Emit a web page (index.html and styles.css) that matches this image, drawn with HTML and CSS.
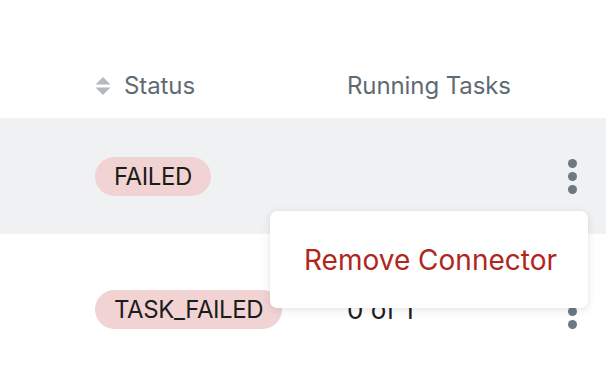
FILE: index.html
```html
<!DOCTYPE html>
<html>
<head>
<meta charset="utf-8">
<link rel="stylesheet" href="styles.css">
</head>
<body>
<div class="table">
  <div class="row head">
    <div class="cell c-status">
      <svg class="sort" width="16" height="18" viewBox="0 0 16 18"><path d="M8 0 L15.5 7.5 H0.5 Z M8 18 L15.5 10.5 H0.5 Z" fill="#b3babe"/></svg>
      <span>Status</span>
    </div>
    <div class="cell c-tasks">Running Tasks</div>
  </div>
  <div class="row body r1">
    <div class="cell c-status"><span class="badge">FAILED</span></div>
    <div class="cell c-tasks"></div>
    <div class="kebab"><i></i><i></i><i></i></div>
  </div>
  <div class="row body r2">
    <div class="cell c-status"><span class="badge">TASK_FAILED</span></div>
    <div class="cell c-tasks val">0 of 1</div>
    <div class="kebab"><i></i><i></i><i></i></div>
  </div>
</div>
<div class="menu">
  <div class="menu-item">Remove Connector</div>
</div>
</body>
</html>
```
FILE: styles.css
```css
html, body {
  margin: 0;
  padding: 0;
  background: #ffffff;
  width: 606px;
  height: 376px;
  overflow: hidden;
  font-family: Inter, "Noto Sans", sans-serif;
}
.table {
  display: flex;
  flex-direction: column;
}
.row {
  display: flex;
  align-items: center;
  padding-left: 95px;
}
.head {
  height: 118px;
  align-items: flex-end;
  box-sizing: border-box;
  padding-bottom: 18px;
  color: #5f6b73;
  font-size: 24px;
  letter-spacing: -0.1px;
}
.cell.c-status {
  width: 252px;
  display: flex;
  align-items: center;
  gap: 13px;
}
.cell.c-tasks {
  flex: 1;
}
.sort {
  display: block;
}
.body {
  height: 116px;
}
.r1 {
  background: #f0f1f3;
}
.r2 {
  align-items: flex-start;
  padding-top: 56px;
  box-sizing: border-box;
}
.badge {
  display: inline-block;
  background: #f2d3d3;
  color: #1c1c1c;
  font-size: 24px;
  letter-spacing: -0.4px;
  line-height: 39px;
  height: 39px;
  padding: 0 19px;
  border-radius: 20px;
}
.val {
  font-size: 26px;
  color: #1c1c1c;
  line-height: 39px;
}
.kebab {
  width: 10px;
  display: flex;
  flex-direction: column;
  gap: 4px;
  margin-right: 28px;
}
.r2 .kebab {
  margin-top: 4px;
}
.kebab i {
  display: block;
  width: 9px;
  height: 9px;
  border-radius: 50%;
  background: #6d7880;
}
.menu {
  position: absolute;
  left: 270px;
  top: 211px;
  width: 318px;
  height: 97px;
  background: #ffffff;
  border-radius: 7px;
  box-shadow: 0 2px 10px rgba(0,0,0,0.10), 0 0 2px rgba(0,0,0,0.06);
  display: flex;
  align-items: center;
}
.menu-item {
  padding-left: 34px;
  color: #b0271d;
  font-size: 28px;
}
```
